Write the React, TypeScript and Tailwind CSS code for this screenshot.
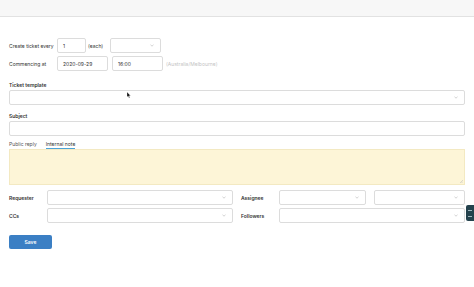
import React from "react";

function Chevron() {
  return (
    <svg width="4" height="3" viewBox="0 0 4 3" className="shrink-0">
      <path d="M0.5 0.8 L2 2.2 L3.5 0.8" fill="none" stroke="#b5b5b5" strokeWidth="0.6" />
    </svg>
  );
}

function Select({ className = "" }: { className?: string }) {
  return (
    <div
      className={`h-[15px] border border-[#dcdcdc] rounded-[2px] bg-white flex items-center justify-end pr-[6px] ${className}`}
    >
      <Chevron />
    </div>
  );
}

function Input({ value, className = "" }: { value?: string; className?: string }) {
  return (
    <div
      className={`h-[15px] border border-[#dcdcdc] rounded-[2px] bg-white flex items-center pl-[5px] text-[#333] ${className}`}
    >
      {value}
    </div>
  );
}

export default function App() {
  return (
    <div
      className="w-[474px] h-[287px] bg-white relative overflow-hidden text-[5px] leading-[8px] text-[#333] whitespace-nowrap"
      style={{ fontFamily: "Inter, 'Liberation Sans', sans-serif" }}
    >
      <div className="h-[17px] bg-[#f7f7f7] border-b border-[#e2e2e2]" />

      <div className="pl-[9px] pr-[9px] pt-[21px]">
        <div className="flex items-center h-[15px]">
          <span className="w-[48px]">Create ticket every</span>
          <Input value="1" className="w-[29px]" />
          <span className="ml-[2px] w-[22px]">(each)</span>
          <Select className="w-[51px]" />
        </div>
        <div className="flex items-center h-[15px] mt-[3px]">
          <span className="w-[48px]">Commencing at</span>
          <Input value="2020-09-29" className="w-[51px]" />
          <Input value="16:00" className="w-[51px] ml-[4px]" />
          <span className="ml-[3px] text-[#c4c4c4]">(Australia/Melbourne)</span>
        </div>

        <div className="mt-[10px] font-semibold">Ticket template</div>
        <Select className="mt-[1px] w-full" />

        <div className="mt-[7px] font-semibold">Subject</div>
        <Input className="mt-[1px] w-full" />

        <div className="mt-[4px] flex gap-[9px] h-[9px] items-start">
          <span className="text-[#555]">Public reply</span>
          <span className="border-b border-[#4aa3d8] h-[9px]">Internal note</span>
        </div>
        <div className="h-[36px] bg-[#fdf5d7] border border-[#f3e9c2] relative">
          <svg width="4" height="4" viewBox="0 0 4 4" className="absolute right-[1px] bottom-[1px]">
            <path d="M1 4 L4 1 M2.5 4 L4 2.5" stroke="#bbb" strokeWidth="0.5" />
          </svg>
        </div>

        <div className="mt-[5px] flex items-center h-[15px]">
          <span className="w-[38px] font-semibold">Requester</span>
          <Select className="w-[186px]" />
          <span className="ml-[8px] w-[38px] font-semibold">Assignee</span>
          <Select className="w-[87px]" />
          <Select className="ml-[8px] flex-1" />
        </div>
        <div className="mt-[3px] flex items-center h-[15px]">
          <span className="w-[38px] font-semibold">CCs</span>
          <Select className="w-[186px]" />
          <span className="ml-[8px] w-[38px] font-semibold">Followers</span>
          <Select className="flex-1" />
        </div>

        <div className="mt-[12px] w-[43px] h-[14px] bg-[#3b7fc4] rounded-[2px] text-white font-semibold flex items-center justify-center">
          Save
        </div>
      </div>

      <div className="absolute right-0 top-[205px] w-[8px] h-[16px] bg-[#24424d] rounded-l-[2px] flex items-center justify-center">
        <div className="w-[4px] h-[7px] border-y border-[#9fb6bd]" />
      </div>

      <svg width="4" height="6" viewBox="0 0 4 6" className="absolute left-[127px] top-[92px]">
        <path d="M0 0 L0 5 L1.2 4 L2 6 L2.8 5.6 L2 3.8 L3.6 3.8 Z" fill="#111" stroke="#fff" strokeWidth="0.3" />
      </svg>
    </div>
  );
}
